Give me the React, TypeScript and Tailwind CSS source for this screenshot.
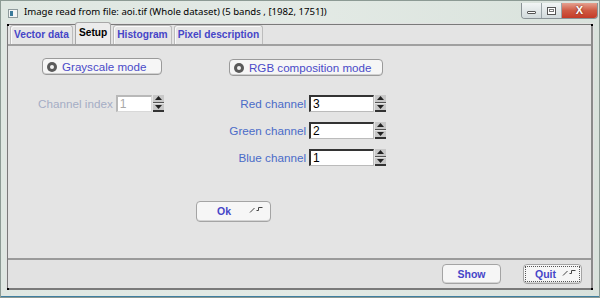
import React from "react";

const Step = () => (
  <svg width="14" height="8" viewBox="0 0 14 8" className="shrink-0">
    <path d="M1 7.5 L5.5 3" stroke="#444" strokeWidth="1" fill="none" />
    <path d="M7.5 5.5 H9.5 V2.5 H13.5" stroke="#444" strokeWidth="1" fill="none" />
  </svg>
);

const Spinner = () => (
  <div className="w-[11px] h-[17px] flex flex-col gap-[1px] ml-[1px]">
    <div className="flex-1 bg-[#c8c8c8] flex items-center justify-center border-b border-[#555]">
      <svg width="7" height="4" viewBox="0 0 7 4"><path d="M0 4 L3.5 0 L7 4 Z" fill="#222" /></svg>
    </div>
    <div className="flex-1 bg-[#c8c8c8] flex items-center justify-center border-b-2 border-[#333]">
      <svg width="7" height="4" viewBox="0 0 7 4"><path d="M0 0 L3.5 4 L7 0 Z" fill="#222" /></svg>
    </div>
  </div>
);

const Field = ({ value, w, disabled }: { value: string; w: string; disabled?: boolean }) => (
  <div className="flex items-center">
    <div
      className={
        "h-[17px] bg-white flex items-center pl-[2px] text-[12px] leading-none border-t-2 border-l-2 border-r border-b " +
        w +
        (disabled
          ? " border-t-[#b8b8b8] border-l-[#b8b8b8] border-r-[#d8d8d8] border-b-[#d8d8d8] text-[#a8a8a8]"
          : " border-t-[#333] border-l-[#333] border-r-[#bbb] border-b-[#bbb] text-black")
      }
    >
      {value}
    </div>
    <Spinner />
  </div>
);

const Radio = ({ label, w }: { label: string; w: string }) => (
  <div
    className={
      "h-[17px] rounded-[4px] border border-[#9a9a9a] bg-[#f6f6f6] flex items-center pl-[4px] shadow-[inset_0_-1px_0_#d0d0d0] " +
      w
    }
  >
    <div className="w-[10px] h-[10px] rounded-full bg-[#5a5a5a] flex items-center justify-center">
      <div className="w-[4px] h-[4px] rounded-full bg-[#f0f0f0]" />
    </div>
    <span className="ml-[5px] text-[11.6px] leading-none text-[#4a4ac8] whitespace-nowrap">{label}</span>
  </div>
);

const Tab = ({ label, selected }: { label: string; selected?: boolean }) => (
  <div
    className={
      "flex items-center px-[3px] border border-b-0 rounded-t-[3px] text-[10.2px] font-bold leading-none whitespace-nowrap " +
      (selected
        ? "h-[22px] bg-[#ececec] border-[#a8a8a8] text-black"
        : "h-[19px] bg-[#e6e6e6] border-[#bcbcbc] text-[#4545c8] shadow-[inset_1px_1px_0_#fafafa]")
    }
  >
    {label}
  </div>
);

export default function App() {
  return (
    <div
      className="w-[600px] h-[298px] flex flex-col bg-gradient-to-r from-[#dfe7e2] via-[#e3eae5] to-[#d9e2dc] border border-[#8c9a94] overflow-hidden"
      style={{ fontFamily: '"Liberation Sans", Arial, sans-serif' }}
    >
      {/* title bar */}
      <div className="h-[22px] flex items-start shrink-0">
        <div className="mt-[8px] ml-[7px] w-[10px] h-[9px] bg-[#f2f4f4] border border-[#8e9a9c] flex items-center">
          <div className="ml-[1px] w-[3px] h-[5px] bg-[#3a7a9a]" />
        </div>
        <span
          className="ml-[6px] mt-[5px] text-[9.6px] leading-[12px] text-black whitespace-nowrap"
          style={{ fontFamily: '"Noto Sans", "DejaVu Sans", sans-serif' }}
        >
          Image read from file: aoi.tif (Whole dataset) (5 bands , [1982, 1751])
        </span>
        <div className="flex-1" />
        <div className="mt-[2px] mr-[1px] flex h-[16px] rounded-b-[4px] overflow-hidden border border-[#8a9296] border-t-0">
          <div className="w-[20px] bg-gradient-to-b from-[#f2f5f5] to-[#d2dadc] border-r border-[#9aa4a8] flex items-center justify-center">
            <div className="w-[9px] h-[3px] border border-[#555] bg-white rounded-[1px] mt-[3px]" />
          </div>
          <div className="w-[20px] bg-gradient-to-b from-[#f2f5f5] to-[#d2dadc] border-r border-[#9aa4a8] flex items-center justify-center">
            <div className="w-[9px] h-[8px] border border-[#555] bg-white flex items-center justify-center">
              <div className="w-[5px] h-[3px] border border-[#777]" />
            </div>
          </div>
          <div className="w-[35px] bg-gradient-to-b from-[#e4a090] via-[#cf5a44] to-[#c43a28] flex items-center justify-center">
            <span className="text-white font-bold text-[11px] leading-none" style={{ textShadow: "0 0 2px #602010" }}>
              X
            </span>
          </div>
        </div>
      </div>

      {/* client */}
      <div className="flex-1 mx-[5px] bg-[#e2e2e2] pt-[1px] px-[1px] pb-0 flex">
        <div className="flex-1 flex flex-col border-t border-l border-[#7a7a7a] border-r-2 border-r-[#8a8a8a] border-b-2 border-b-[#7a7a7a] relative">
          <div className="absolute -left-[1px] -top-[1px] w-[2px] h-[2px] bg-black" />
          <div className="absolute -right-[2px] -top-[1px] w-[2px] h-[2px] bg-black" />
          <div className="absolute -left-[1px] -bottom-[2px] w-[2px] h-[2px] bg-black" />
          <div className="absolute -right-[2px] -bottom-[2px] w-[2px] h-[2px] bg-black" />
          {/* tabs */}
          <div className="h-[21px] flex items-end gap-[2px] pl-[2px] border-b-2 border-[#a0a0a0] bg-[#e4e4e4]">
            <Tab label="Vector data" />
            <Tab label="Setup" selected />
            <Tab label="Histogram" />
            <Tab label="Pixel description" />
          </div>
          {/* panel */}
          <div className="flex-1 flex flex-col border-b-2 border-[#9a9a9a] bg-[#e4e4e4]">
            <div className="flex mt-[12px]">
              <div className="ml-[30px] w-[188px] flex flex-col">
                <div className="ml-[4px]">
                  <Radio label="Grayscale mode" w="w-[120px]" />
                </div>
                <div className="mt-[20px] flex items-center">
                  <span className="text-[11.7px] leading-none text-[#a4adc4] mr-[3px] whitespace-nowrap">Channel index</span>
                  <Field value="1" w="w-[36px]" disabled />
                </div>
              </div>
              <div className="w-[160px] flex flex-col">
                <div className="mt-[1px] ml-[3px]">
                  <Radio label="RGB composition mode" w="w-[154px]" />
                </div>
                <div className="mt-[19px] flex flex-col gap-[10px]">
                  {[
                    ["Red channel", "3"],
                    ["Green channel", "2"],
                    ["Blue channel", "1"],
                  ].map(([l, v]) => (
                    <div key={l} className="flex items-center justify-end">
                      <span className="text-[11.7px] leading-none text-[#4a6bc8] mr-[3px] whitespace-nowrap">{l}</span>
                      <Field value={v} w="w-[65px]" />
                    </div>
                  ))}
                </div>
              </div>
            </div>
            <div className="mt-[35px] ml-[188px]">
              <div className="w-[75px] h-[21px] rounded-[4px] border border-[#a4a4a4] bg-[#f6f6f6] flex items-center pl-[20px] pr-[7px] shadow-[inset_0_-1px_0_#d4d4d4]">
                <span className="text-[10.5px] font-bold text-[#4545c8] leading-none">Ok</span>
                <div className="flex-1" />
                <div className="-mt-[5px]"><Step /></div>
              </div>
            </div>
          </div>
          {/* buttons */}
          <div className="h-[28px] flex items-center justify-end pr-[9px] gap-[22px] bg-[#e2e2e2]">
            <div className="w-[59px] h-[20px] rounded-[4px] border border-[#a4a4a4] bg-[#f6f6f6] flex items-center justify-center shadow-[inset_0_-1px_0_#d4d4d4]">
              <span className="text-[10.5px] font-bold text-[#4545c8] leading-none">Show</span>
            </div>
            <div className="w-[59px] h-[20px] rounded-[4px] border border-[#a4a4a4] bg-[#f6f6f6] p-[1px] shadow-[inset_0_-1px_0_#d4d4d4]">
              <div className="w-full h-full border border-dotted border-[#555] flex items-center pl-[9px] pr-[3px]">
                <span className="text-[10.5px] font-bold text-[#4545c8] leading-none">Quit</span>
                <div className="flex-1" />
                <div className="-mt-[4px]"><Step /></div>
              </div>
            </div>
          </div>
        </div>
      </div>
      <div className="h-[7px] shrink-0 border-b border-[#3f7fa0]" />
    </div>
  );
}
